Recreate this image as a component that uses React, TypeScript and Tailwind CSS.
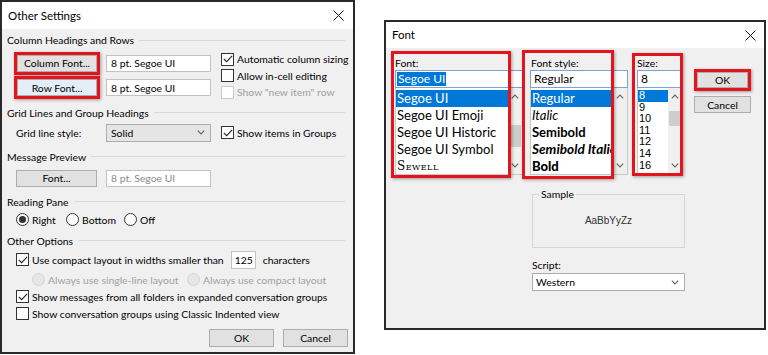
import type { ReactNode } from "react";

const CloseIcon = () => (
  <svg width="11" height="11" viewBox="0 0 11 11" fill="none">
    <path d="M0.5 0.5l10 10M10.5 0.5l-10 10" stroke="#111" strokeWidth="1" />
  </svg>
);

const Chevron = ({ up, color = "#606060" }: { up?: boolean; color?: string }) => (
  <svg width="8" height="5" viewBox="0 0 8 5" fill="none">
    <path d={up ? "M0.8 4.3L4 1.1l3.2 3.2" : "M0.8 0.7L4 3.9l3.2-3.2"} stroke={color} strokeWidth="1.1" />
  </svg>
);

const CheckBox = ({ checked, disabled }: { checked?: boolean; disabled?: boolean }) => (
  <span
    className={`w-[13px] h-[13px] border bg-white flex items-center justify-center shrink-0 ${
      disabled ? "border-[#cccccc]" : "border-[#333333]"
    }`}
  >
    {checked && (
      <svg width="10" height="8" viewBox="0 0 10 8" fill="none">
        <path d="M0.8 3.8l2.8 2.9L9.2 0.9" stroke="#222" strokeWidth="1.1" />
      </svg>
    )}
  </span>
);

const Radio = ({ checked, disabled }: { checked?: boolean; disabled?: boolean }) => (
  <span
    className={`w-[13px] h-[13px] rounded-full border flex items-center justify-center shrink-0 ${
      disabled ? "border-[#d4d4d4] bg-[#e6e6e6]" : "border-[#333333] bg-white"
    }`}
  >
    {checked && <span className="w-[7px] h-[7px] rounded-full bg-[#333333]" />}
  </span>
);

const Btn = ({ children, className }: { children: ReactNode; className?: string }) => (
  <div
    className={`flex items-center justify-center bg-[#e1e1e1] border border-[#adadad] text-black ${className ?? ""}`}
  >
    {children}
  </div>
);

const RedBox = ({ children }: { children: ReactNode }) => (
  <div className="border-[3px] border-[#e3141c] shadow-[1px_1px_3px_rgba(0,0,0,0.35)]">{children}</div>
);

const GroupLabel = ({ children, className }: { children: ReactNode; className?: string }) => (
  <div className={`flex items-center h-[14px] gap-[5px] ${className ?? ""}`}>
    <span className="whitespace-nowrap">{children}</span>
    <div className="flex-1 h-px bg-[#d9d9d9]" />
  </div>
);

const Field = ({ value, muted }: { value: string; muted?: boolean }) => (
  <div
    className={`w-[105px] h-[17px] bg-white border border-[#c2c2c2] flex items-center px-[4px] whitespace-nowrap ${
      muted ? "text-[#8a8a8a]" : ""
    }`}
  >
    {value}
  </div>
);

const CheckRow = ({
  label,
  checked,
  disabled,
  className,
}: {
  label: string;
  checked?: boolean;
  disabled?: boolean;
  className?: string;
}) => (
  <div className={`flex items-center gap-[3px] whitespace-nowrap ${disabled ? "text-[#a0a0a0]" : ""} ${className ?? ""}`}>
    <CheckBox checked={checked} disabled={disabled} />
    <span>{label}</span>
  </div>
);

function OtherSettings() {
  return (
    <div className="w-[355px] h-[354px] border-2 border-[#2a2a2a] bg-[#f0f0f0] flex flex-col shrink-0">
      {/* Title bar */}
      <div className="h-[27px] bg-white flex items-center justify-between pl-[6px] pr-[9px]">
        <span className="text-[11.5px]">Other Settings</span>
        <CloseIcon />
      </div>

      <div className="flex flex-col pl-[5px] pr-[8px]">
        <GroupLabel className="mt-[4px]">Column Headings and Rows</GroupLabel>
        <div className="flex mt-[4px] pl-[7px]">
          <div className="flex flex-col">
            <div className="h-[24.5px] flex items-center gap-[6px]">
              <RedBox>
                <Btn className="w-[80px] h-[17px] bg-[#dcdcdc] border-[#8c8c8c]">Column Font...</Btn>
              </RedBox>
              <Field value="8 pt. Segoe UI" />
            </div>
            <div className="h-[24.5px] flex items-center gap-[6px]">
              <RedBox>
                <Btn className="w-[80px] h-[17px] bg-[#e3eef9] border-[#4f8fd0]">Row Font...</Btn>
              </RedBox>
              <Field value="8 pt. Segoe UI" />
            </div>
          </div>
          <div className="flex flex-col ml-[10px]">
            <CheckRow className="h-[16.5px]" label="Automatic column sizing" checked />
            <CheckRow className="h-[16.5px]" label="Allow in-cell editing" />
            <CheckRow className="h-[16.5px]" label={'Show "new item" row'} disabled />
          </div>
        </div>

        <GroupLabel className="mt-[5px]">Grid Lines and Group Headings</GroupLabel>
        <div className="flex items-center h-[18px] mt-[4px] pl-[9px]">
          <span className="w-[90px]">Grid line style:</span>
          <div className="w-[105px] h-[18px] bg-[#e5e5e5] border border-[#adadad] flex items-center justify-between pl-[4px] pr-[5px]">
            <span>Solid</span>
            <Chevron />
          </div>
          <CheckRow className="ml-[10px]" label="Show items in Groups" checked />
        </div>

        <GroupLabel className="mt-[8px]">Message Preview</GroupLabel>
        <div className="flex items-center h-[17px] mt-[6px] pl-[9px] gap-[9px]">
          <Btn className="w-[81px] h-[17px]">Font...</Btn>
          <Field value="8 pt. Segoe UI" muted />
        </div>

        <GroupLabel className="mt-[8px]">Reading Pane</GroupLabel>
        <div className="flex items-center h-[16px] mt-[3px] pl-[9px]">
          <div className="flex items-center gap-[3px] w-[50px]">
            <Radio checked />
            <span>Right</span>
          </div>
          <div className="flex items-center gap-[3px] w-[58px]">
            <Radio />
            <span>Bottom</span>
          </div>
          <div className="flex items-center gap-[3px]">
            <Radio />
            <span>Off</span>
          </div>
        </div>

        <GroupLabel className="mt-[6px]">Other Options</GroupLabel>
        <div className="flex items-center h-[18px] mt-[3px] pl-[9px] whitespace-nowrap">
          <CheckBox checked />
          <span className="ml-[3px]">Use compact layout in widths smaller than</span>
          <div className="ml-[7px] w-[25px] h-[18px] bg-white border border-[#c2c2c2] flex items-center pl-[3px]">125</div>
          <span className="ml-[7px]">characters</span>
        </div>
        <div className="flex items-center h-[16px] mt-[3px] pl-[25px] text-[#a0a0a0] whitespace-nowrap">
          <Radio disabled />
          <span className="ml-[3px] w-[139px]">Always use single-line layout</span>
          <Radio disabled />
          <span className="ml-[3px]">Always use compact layout</span>
        </div>
        <CheckRow className="h-[16px] mt-[1px] pl-[9px]" label="Show messages from all folders in expanded conversation groups" checked />
        <CheckRow className="h-[16px] mt-[1px] pl-[9px]" label="Show conversation groups using Classic Indented view" />

        <div className="flex justify-end gap-[9px] mt-[7px] -mr-[3px]">
          <Btn className="w-[65px] h-[18px]">OK</Btn>
          <Btn className="w-[65px] h-[18px]">Cancel</Btn>
        </div>
      </div>
    </div>
  );
}

const Scrollbar = ({ thumb }: { thumb?: [number, number] }) => (
  <div className="w-[14px] h-full bg-[#f0f0f0] flex flex-col items-center justify-between py-[6px] relative shrink-0">
    <Chevron up />
    {thumb && (
      <div className="absolute left-[1px] right-[1px] bg-[#cdcdcd]" style={{ top: thumb[0], height: thumb[1] }} />
    )}
    <Chevron />
  </div>
);

function FontDialog() {
  const fonts = ["Segoe UI", "Segoe UI Emoji", "Segoe UI Historic", "Segoe UI Symbol"];
  const sizes = ["8", "9", "10", "11", "12", "14", "16"];
  return (
    <div className="w-[382px] h-[310px] border-2 border-[#2a2a2a] bg-[#f0f0f0] flex flex-col mt-[20px] ml-[29px] relative shrink-0">
      {/* Title bar */}
      <div className="h-[26px] bg-white flex items-center justify-between pl-[6px] pr-[8px]">
        <span className="text-[11.5px]">Font</span>
        <CloseIcon />
      </div>

      <div className="flex items-start pt-[8px] pl-[9px]">
        {/* Font */}
        <div className="flex flex-col w-[128px]">
          <span className="h-[14px] leading-[14px]">Font:</span>
          <div className="h-[18px] bg-white border border-[#7aa3d8] flex items-center px-[1px]">
            <span className="bg-[#0078d7] text-white text-[12px] leading-[14px] px-[1px]">Segoe UI</span>
          </div>
          <div className="h-[87px] bg-white border border-[#c8c8c8] border-t-0 flex overflow-hidden">
            <div className="flex-1 flex flex-col pt-[2px] text-[13px] leading-[17px] whitespace-nowrap overflow-hidden">
              {fonts.map((f, i) => (
                <div key={f} className={`h-[17px] shrink-0 px-[1px] ${i === 0 ? "bg-[#0078d7] text-white" : ""}`}>
                  {f}
                </div>
              ))}
              <div className="h-[17px] shrink-0 px-[1px] font-['DejaVu_Serif',serif] [font-variant:small-caps] text-[12px] tracking-[0.5px]">
                Sewell
              </div>
            </div>
            <Scrollbar thumb={[37, 22]} />
          </div>
        </div>

        {/* Font style */}
        <div className="flex flex-col w-[98px] ml-[7px]">
          <span className="h-[14px] leading-[14px] pl-[1px]">Font style:</span>
          <div className="h-[18px] bg-white border border-[#7aa3d8] flex items-center px-[3px] text-[12px]">Regular</div>
          <div className="h-[87px] bg-white border border-[#c8c8c8] border-t-0 flex overflow-hidden">
            <div className="flex-1 flex flex-col pt-[2px] text-[13px] leading-[17px] whitespace-nowrap overflow-hidden">
              <div className="h-[17px] shrink-0 px-[1px] bg-[#0078d7] text-white">Regular</div>
              <div className="h-[17px] shrink-0 px-[1px] italic">Italic</div>
              <div className="h-[17px] shrink-0 px-[1px] font-bold">Semibold</div>
              <div className="h-[17px] shrink-0 px-[1px] font-bold italic text-[13.6px]">Semibold Italic</div>
              <div className="h-[17px] shrink-0 px-[1px] font-black">Bold</div>
            </div>
            <Scrollbar />
          </div>
        </div>

        {/* Size */}
        <div className="flex flex-col w-[46px] ml-[9px]">
          <span className="h-[14px] leading-[14px]">Size:</span>
          <div className="h-[18px] bg-white border border-[#7aa3d8] flex items-center px-[3px] text-[12px]">8</div>
          <div className="h-[87px] bg-white border border-[#c8c8c8] border-t-0 flex overflow-hidden">
            <div className="flex-1 flex flex-col pt-[2px] font-['Liberation_Sans',sans-serif] text-[11px] leading-[11.6px] overflow-hidden">
              {sizes.map((s, i) => (
                <div key={s} className={`h-[11.6px] shrink-0 px-[1px] ${i === 0 ? "bg-[#0078d7] text-white" : ""}`}>
                  {s}
                </div>
              ))}
            </div>
            <Scrollbar thumb={[23, 15]} />
          </div>
        </div>

        {/* Buttons */}
        <div className="flex flex-col w-[57px] ml-[11px] mt-[13px]">
          <RedBox>
            <Btn className="h-[16px] border-[#7a7a7a] bg-[#dedede]">OK</Btn>
          </RedBox>
          <Btn className="h-[17px] mt-[5px]">Cancel</Btn>
        </div>
      </div>

      <div className="flex flex-col ml-[146px] w-[153px]">
        <fieldset className="border border-[#d6d6d6] h-[61px] mt-[12px] px-[6px]">
          <legend className="px-[2px]">Sample</legend>
          <div className="h-[40px] flex items-center justify-center font-['Liberation_Sans',sans-serif] text-[10px] text-[#333]">
            AaBbYyZz
          </div>
        </fieldset>
        <span className="h-[14px] leading-[14px] mt-[10px]">Script:</span>
        <div className="h-[18px] mt-[1px] bg-white border border-[#adadad] flex items-center justify-between pl-[3px] pr-[5px]">
          <span>Western</span>
          <Chevron />
        </div>
      </div>

      {/* Annotation boxes over the lists */}
      <div className="absolute left-[5px] top-[29px] w-[120px] h-[127px] border-[3px] border-[#e3141c] shadow-[1px_1px_3px_rgba(0,0,0,0.35)]" />
      <div className="absolute left-[136px] top-[28px] w-[92px] h-[129px] border-[3px] border-[#e3141c] shadow-[1px_1px_3px_rgba(0,0,0,0.35)]" />
      <div className="absolute left-[246px] top-[31px] w-[51px] h-[123px] border-[3px] border-[#e3141c] shadow-[1px_1px_3px_rgba(0,0,0,0.35)]" />
    </div>
  );
}

export default function App() {
  return (
    <div className="w-[768px] h-[355px] bg-white flex items-start overflow-hidden font-['Lato',sans-serif] text-[10.4px] leading-[14px] text-black">
      <OtherSettings />
      <FontDialog />
    </div>
  );
}
